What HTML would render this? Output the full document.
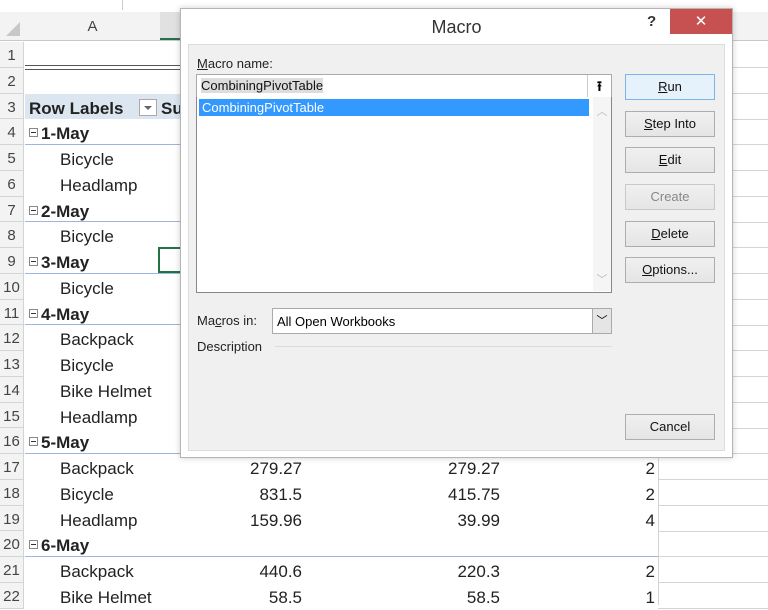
<!DOCTYPE html><html><head><style>
body{margin:0;width:768px;height:605px;overflow:hidden;background:#fff;font-family:"Liberation Sans",sans-serif;position:relative}
.a{position:absolute}
.rn{position:absolute;left:0;width:24px;text-align:center;font-size:15px;color:#444;background:#f3f3f3;border-right:1px solid #d4d4d4;border-bottom:1px solid #d4d4d4;box-sizing:border-box}
.cell{position:absolute;font-size:17px;color:#222;white-space:nowrap}
.b{font-weight:bold}
.gl{position:absolute;left:658px;width:110px;height:1px;background:#d4d4d4}
.btn{position:absolute;left:625px;width:90px;height:26px;box-sizing:border-box;border:1px solid #adadad;background:linear-gradient(#f0f0f0,#e5e5e5);font-size:13px;text-align:center;line-height:24px;color:#111}
.minus{display:inline-block;width:9px;height:9px;border:1px solid #888;box-sizing:border-box;position:relative;top:-2px;margin-right:3px;background:#fff}
.minus:after{content:"";position:absolute;left:1px;right:1px;top:3px;height:1px;background:#333}
</style></head><body>
<div class="a" style="left:0;top:0;width:768px;height:12px;background:#fff;border-bottom:1px solid #d4d4d4"></div>
<div class="a" style="left:122px;top:0;width:1px;height:10px;background:#ccc"></div>
<div class="a" style="left:0;top:12px;width:768px;height:28px;background:#f3f3f3;border-bottom:1px solid #c8c8c8"></div>
<div class="a" style="left:6px;top:22px;width:0;height:0;border-left:14px solid transparent;border-bottom:14px solid #c8c8c8"></div>
<div class="a" style="left:25px;top:12px;width:135px;height:28px;text-align:center;line-height:30px;font-size:15px;color:#444;border-right:1px solid #d4d4d4">A</div>
<div class="a" style="left:160px;top:12px;width:30px;height:28px;background:#e1e1e1;border-bottom:2px solid #217346;box-sizing:border-box"></div>
<div id="rows"></div>
<script>
var rows=[["",""],["",""],["Row Labels","",1],["1-May","",2],["Bicycle",""],["Headlamp",""],["2-May","",2],["Bicycle",""],["3-May","",2],["Bicycle",""],["4-May","",2],["Backpack",""],["Bicycle",""],["Bike Helmet",""],["Headlamp",""],["5-May","",2],["Backpack","279.27","279.27","2"],["Bicycle","831.5","415.75","2"],["Headlamp","159.96","39.99","4"],["6-May","",2],["Backpack","440.6","220.3","2"],["Bike Helmet","58.5","58.5","1"]];
var h="";
for(var i=0;i<rows.length;i++){var t=42+i*25.75;var r=rows[i];
h+='<div class="rn" style="top:'+t+'px;height:25.75px;line-height:27px">'+(i+1)+'</div>';
h+='<div class="gl" style="top:'+(t+25)+'px"></div>';
if(i==2){h+='<div class="a" style="left:25px;top:'+t+'px;width:160px;height:25.75px;background:#dce6f1"></div><div class="cell b" style="left:29px;top:'+(t+5)+'px">Row Labels</div><div class="a" style="left:139px;top:'+(t+5)+'px;width:18px;height:17px;border:1px solid #aaa;background:#fff;box-sizing:border-box"><div class="a" style="left:4px;top:6px;border-left:4px solid transparent;border-right:4px solid transparent;border-top:4px solid #666"></div></div><div class="cell b" style="left:161px;top:'+(t+5)+'px">Su</div>';}
else if(r[2]===2){h+='<div class="cell b" style="left:29px;top:'+(t+5)+'px"><span class="minus"></span>'+r[0]+'</div><div class="a" style="left:25px;top:'+(t+24.5)+'px;width:633px;height:1px;background:#9bb7e0"></div>';}
else if(r[0]){h+='<div class="cell" style="left:60px;top:'+(t+5)+'px">'+r[0]+'</div>';}
if(r[3]){h+='<div class="cell" style="right:466px;top:'+(t+5)+'px">'+r[1]+'</div><div class="cell" style="right:268px;top:'+(t+5)+'px">'+r[2]+'</div><div class="cell" style="right:113px;top:'+(t+5)+'px">'+r[3]+'</div>';}
}
document.getElementById("rows").innerHTML=h;
</script>
<div class="a" style="left:25px;top:65px;width:160px;height:3px;border-top:1px solid #555;border-bottom:1px solid #555"></div>
<div class="a" style="left:158px;top:247px;width:25px;height:26px;border:2px solid #217346;box-sizing:border-box"></div>
<div class="a" style="left:658px;top:40px;width:1px;height:565px;background:#d4d4d4"></div>
<!-- dialog -->
<div class="a" style="left:180px;top:8px;width:553px;height:450px;background:#fff;border:1px solid #b5b5b5;box-sizing:border-box;box-shadow:0 0 6px rgba(0,0,0,.2)">
<div class="a" style="left:0;top:8px;width:551px;text-align:center;font-size:18px;color:#333">Macro</div>
<div class="a" style="left:466px;top:4px;font-size:15px;font-weight:bold;color:#333">?</div>
<div class="a" style="left:489px;top:0;width:62px;height:25px;background:#c75050;color:#fff;text-align:center;font-size:15px;line-height:25px">✕</div>
<div class="a" style="left:7px;top:35px;width:537px;height:407px;background:#f0f0f0;border:1px solid #dcdcdc;box-sizing:border-box"></div>
</div>
<div class="a" style="left:197px;top:56px;font-size:13px;color:#222"><u>M</u>acro name:</div>
<div class="a" style="left:196px;top:74px;width:416px;height:24px;border:1px solid #aaa;background:#fff;box-sizing:border-box"><span class="a" style="left:4px;top:3px;font-size:13px;background:#ddd;color:#111">CombiningPivotTable</span><div class="a" style="right:0;top:0;width:23px;height:22px;border-left:1px solid #ccc;text-align:center;font-size:14px;font-weight:bold;line-height:22px">⭱</div></div>
<div class="a" style="left:196px;top:97px;width:416px;height:196px;border:1px solid #888;border-top:none;background:#fff;box-sizing:border-box">
<div class="a" style="left:2px;top:2px;width:390px;height:17px;background:#3399ff;color:#fff;font-size:13px;line-height:17px;padding-left:3px;box-sizing:border-box">CombiningPivotTable</div>
<div class="a" style="right:0;top:0;width:18px;height:194px;background:#f5f5f5;color:#bbb;font-size:11px;text-align:center"><div style="margin-top:6px">︿</div><div style="position:absolute;bottom:4px;width:18px">﹀</div></div></div>
<div class="a" style="left:197px;top:313px;font-size:13px;color:#222">Ma<u>c</u>ros in:</div>
<div class="a" style="left:272px;top:308px;width:340px;height:26px;border:1px solid #aaa;background:#fff;box-sizing:border-box"><span class="a" style="left:4px;top:5px;font-size:13px">All Open Workbooks</span><div class="a" style="right:0;top:0;width:18px;height:24px;background:#e5e5e5;border-left:1px solid #aaa;text-align:center;font-size:11px;line-height:24px">﹀</div></div>
<div class="a" style="left:197px;top:339px;font-size:13px;color:#222">Description</div>
<div class="a" style="left:275px;top:346px;width:337px;height:1px;background:#dcdcdc"></div>
<div class="btn" style="top:74px;border-color:#7eb4ea;background:#e5f1fb"><u>R</u>un</div>
<div class="btn" style="top:111px"><u>S</u>tep Into</div>
<div class="btn" style="top:147px"><u>E</u>dit</div>
<div class="btn" style="top:184px;color:#888;border-color:#c8c8c8">Create</div>
<div class="btn" style="top:221px"><u>D</u>elete</div>
<div class="btn" style="top:257px"><u>O</u>ptions...</div>
<div class="btn" style="top:414px">Cancel</div>
</body></html>
